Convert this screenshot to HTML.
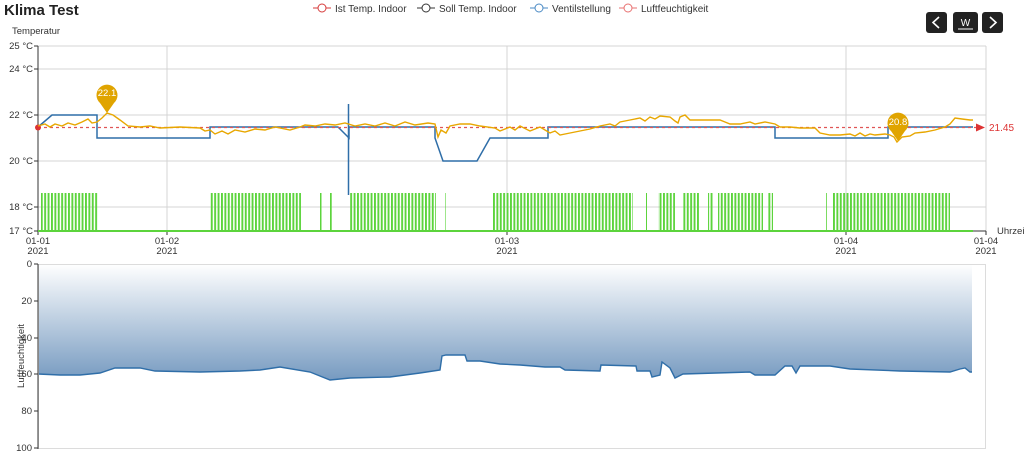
<!DOCTYPE html>
<html><head><meta charset="utf-8"><style>
body{margin:0;width:1024px;height:464px;background:#fff;overflow:hidden;font-family:"Liberation Sans",sans-serif}
</style></head><body>
<svg width="1024" height="464" viewBox="0 0 1024 464" xmlns="http://www.w3.org/2000/svg" font-family="Liberation Sans, sans-serif">
<defs>
<pattern id="bars" x="0" y="0" width="3.4" height="40" patternUnits="userSpaceOnUse"><rect x="0" y="0" width="1.9" height="40" fill="#5cd43c"/></pattern>
<linearGradient id="hum" x1="0" y1="0" x2="0" y2="1"><stop offset="0" stop-color="#fff"/><stop offset="1" stop-color="#6f95bd"/></linearGradient>
</defs>
<text x="4" y="15" font-size="15" font-weight="bold" fill="#222">Klima Test</text>
<g font-size="10" fill="#333">
<line x1="313" y1="8" x2="331" y2="8" stroke="#d63a3a"/><circle cx="322" cy="8" r="4" fill="#fff" stroke="#d63a3a"/><text x="335" y="12">Ist Temp. Indoor</text>
<line x1="417" y1="8" x2="435" y2="8" stroke="#333"/><circle cx="426" cy="8" r="4" fill="#fff" stroke="#333"/><text x="439" y="12">Soll Temp. Indoor</text>
<line x1="530" y1="8" x2="548" y2="8" stroke="#4a8ac4"/><circle cx="539" cy="8" r="4" fill="#fff" stroke="#4a8ac4"/><text x="552" y="12">Ventilstellung</text>
<line x1="619" y1="8" x2="637" y2="8" stroke="#e87070"/><circle cx="628" cy="8" r="4" fill="#fff" stroke="#e87070"/><text x="641" y="12">Luftfeuchtigkeit</text>
</g>
<g>
<rect x="926" y="12" width="21" height="21" rx="3" fill="#222"/><path d="M939 17 L933 22.5 L939 28" fill="none" stroke="#fff" stroke-width="1.6"/>
<rect x="953" y="12" width="25" height="21" rx="3" fill="#222"/><text x="965.5" y="26" font-size="10" fill="#fff" text-anchor="middle">W</text><line x1="958" y1="29" x2="973" y2="29" stroke="#fff"/>
<rect x="982" y="12" width="21" height="21" rx="3" fill="#222"/><path d="M990 17 L996 22.5 L990 28" fill="none" stroke="#fff" stroke-width="1.6"/>
</g>
<text x="12" y="34" font-size="9.5" fill="#333">Temperatur</text>
<g stroke="#d4d4d4" stroke-width="1">
<line x1="38" y1="46" x2="986" y2="46"/><line x1="38" y1="69" x2="986" y2="69"/><line x1="38" y1="115" x2="986" y2="115"/><line x1="38" y1="161" x2="986" y2="161"/><line x1="38" y1="207" x2="986" y2="207"/>
<line x1="167" y1="46" x2="167" y2="231"/><line x1="507" y1="46" x2="507" y2="231"/><line x1="846" y1="46" x2="846" y2="231"/>
<line x1="986" y1="46" x2="986" y2="231"/>
</g>
<g font-size="9.5" fill="#333" text-anchor="end">
<text x="33" y="49">25 °C</text><text x="33" y="72">24 °C</text><text x="33" y="118">22 °C</text><text x="33" y="164">20 °C</text><text x="33" y="210">18 °C</text><text x="33" y="234">17 °C</text>
</g>
<line x1="38" y1="46" x2="38" y2="232" stroke="#333"/>
<g stroke="#333"><line x1="34" y1="46" x2="38" y2="46"/><line x1="34" y1="69" x2="38" y2="69"/><line x1="34" y1="115" x2="38" y2="115"/><line x1="34" y1="161" x2="38" y2="161"/><line x1="34" y1="207" x2="38" y2="207"/><line x1="34" y1="231" x2="38" y2="231"/>
<line x1="38" y1="231" x2="38" y2="235"/><line x1="167" y1="231" x2="167" y2="235"/><line x1="507" y1="231" x2="507" y2="235"/><line x1="846" y1="231" x2="846" y2="235"/><line x1="986" y1="231" x2="986" y2="235"/><line x1="973" y1="231" x2="986" y2="231"/></g>
<g font-size="9.5" fill="#333" text-anchor="middle">
<text x="38" y="244">01-01</text><text x="38" y="254">2021</text>
<text x="167" y="244">01-02</text><text x="167" y="254">2021</text>
<text x="507" y="244">01-03</text><text x="507" y="254">2021</text>
<text x="846" y="244">01-04</text><text x="846" y="254">2021</text>
<text x="986" y="244">01-04</text><text x="986" y="254">2021</text>
</g>
<text x="997" y="234" font-size="9.5" fill="#333">Uhrzeit</text>
<g fill="url(#bars)">
<rect x="41" y="193" width="57" height="38"/><rect x="210" y="193" width="91" height="38"/><rect x="320" y="193" width="2" height="38"/><rect x="330" y="193" width="2" height="38"/><rect x="349" y="193" width="87" height="38"/>
<rect x="444" y="193" width="2" height="38"/><rect x="493" y="193" width="140" height="38"/><rect x="645" y="193" width="2" height="38"/><rect x="658" y="193" width="17" height="38"/><rect x="683" y="193" width="16" height="38"/><rect x="708" y="193" width="5" height="38"/><rect x="718" y="193" width="45" height="38"/><rect x="768" y="193" width="5" height="38"/><rect x="825" y="193" width="2" height="38"/><rect x="832" y="193" width="118" height="38"/>
</g>
<line x1="38" y1="231" x2="973" y2="231" stroke="#5cd43c" stroke-width="2"/>
<path d="M38 127 L52 115 L97 115 L97 138 L210 138 L210 127 L338 127 L349 138 L349 127 L435 127 L435 138 L443 161 L477 161 L490 138 L548 138 L548 127 L775 127 L775 138 L888 138 L888 127 L973 127" fill="none" stroke="#2f6ea8" stroke-width="1.5"/>
<line x1="348.5" y1="104" x2="348.5" y2="195" stroke="#2f6ea8" stroke-width="1.5"/>
<line x1="38" y1="127.5" x2="978" y2="127.5" stroke="#e05555" stroke-width="1.3" stroke-dasharray="3,3"/>
<path d="M976 123.5 L985 127.5 L976 131.5 Z" fill="#d33"/>
<text x="989" y="131" font-size="10" fill="#d33">21.45</text>
<circle cx="38" cy="127.5" r="3" fill="#d33"/>
<path d="M38 126 L45 124 L50 127 L55 124 L62 126 L68 123 L75 125 L82 122 L88 119 L92 123 L97 122 L102 118 L107 113 L113 115 L120 120 L128 126 L140 127 L150 126 L160 128 L180 127 L200 128 L205 131 L210 130 L215 134 L222 131 L228 134 L235 130 L245 132 L255 129 L265 130 L275 127 L290 130 L300 127 L305 125 L315 126 L325 124 L335 125 L345 123 L355 126 L365 124 L375 126 L385 123 L395 126 L405 122 L415 125 L428 123 L435 124 L438 137 L441 130 L446 133 L450 126 L460 124 L470 124 L480 126 L495 128 L500 131 L510 127 L515 130 L520 126 L530 131 L540 127 L550 133 L555 131 L560 135 L570 133 L580 131 L590 129 L600 126 L610 124 L615 126 L620 122 L630 120 L640 118 L645 121 L650 117 L655 119 L660 116 L670 117 L675 121 L678 123 L680 117 L685 115 L690 120 L700 120 L720 120 L725 122 L730 124 L740 124 L750 122 L755 124 L765 122 L775 124 L780 127 L790 127 L800 128 L815 128 L820 133 L830 135 L840 135 L850 134 L855 136 L860 133 L865 136 L870 134 L875 135 L885 134 L890 135 L894 137 L897 142 L902 137 L910 136 L915 133 L925 132 L935 130 L945 127 L950 124 L955 118 L962 119 L970 120 L973 120" fill="none" stroke="#e8a700" stroke-width="1.4"/>
<g>
<path d="M107 113 L100 103 A10.5 10.5 0 1 1 114 103 Z" fill="#e0a400"/><text x="107" y="96" font-size="9.5" fill="#fff" text-anchor="middle">22.1</text>
<path d="M898 141 L891 131 A10.5 10.5 0 1 1 905 131 Z" fill="#e0a400"/><text x="898" y="125" font-size="9.5" fill="#fff" text-anchor="middle">20.8</text>
</g>
<path d="M38 374 L60 375 L80 375 L100 373 L115 368 L140 368 L155 371 L200 372 L240 371 L260 370 L280 367 L310 372 L330 380 L350 378 L390 377 L420 373 L440 370 L442 356 L446 355 L465 355 L467 361 L480 361 L500 364 L520 365 L545 367 L560 367 L565 370 L600 371 L601 365 L636 366 L637 371 L650 371 L652 377 L660 375 L662 362 L670 368 L675 378 L683 374 L750 372 L755 375 L775 375 L785 366 L792 366 L796 373 L800 366 L830 366 L850 369 L900 371 L950 372 L960 369 L965 368 L970 372 L972 372 L972 264 L38 264 Z" fill="url(#hum)" opacity="0.95"/>
<path d="M38 374 L60 375 L80 375 L100 373 L115 368 L140 368 L155 371 L200 372 L240 371 L260 370 L280 367 L310 372 L330 380 L350 378 L390 377 L420 373 L440 370 L442 356 L446 355 L465 355 L467 361 L480 361 L500 364 L520 365 L545 367 L560 367 L565 370 L600 371 L601 365 L636 366 L637 371 L650 371 L652 377 L660 375 L662 362 L670 368 L675 378 L683 374 L750 372 L755 375 L775 375 L785 366 L792 366 L796 373 L800 366 L830 366 L850 369 L900 371 L950 372 L960 369 L965 368 L970 372 L972 372" fill="none" stroke="#2f6ea8" stroke-width="1.4"/>
<rect x="38.5" y="264.5" width="947" height="184" fill="none" stroke="#dcdcdc"/>
<line x1="38" y1="264" x2="38" y2="449" stroke="#333"/>
<g stroke="#333"><line x1="34" y1="264" x2="38" y2="264"/><line x1="34" y1="301" x2="38" y2="301"/><line x1="34" y1="338" x2="38" y2="338"/><line x1="34" y1="374" x2="38" y2="374"/><line x1="34" y1="411" x2="38" y2="411"/><line x1="34" y1="448" x2="38" y2="448"/></g>
<g font-size="9.5" fill="#333" text-anchor="end">
<text x="32" y="267">0</text><text x="32" y="304">20</text><text x="32" y="341">40</text><text x="32" y="377">60</text><text x="32" y="414">80</text><text x="32" y="451">100</text>
</g>
<text transform="translate(24,356) rotate(-90)" font-size="9.5" fill="#333" text-anchor="middle">Luftfeuchtigkeit</text>
</svg>
</body></html>
